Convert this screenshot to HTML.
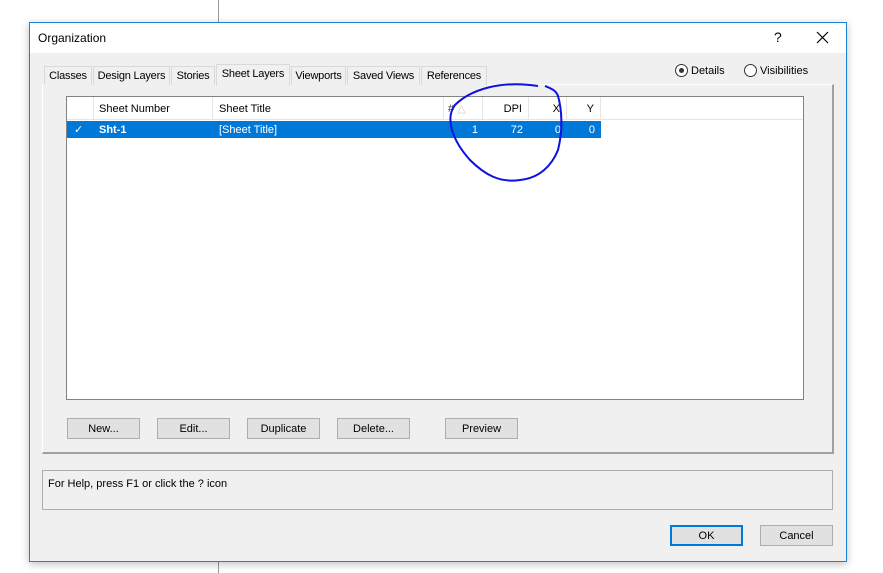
<!DOCTYPE html><html><head><style>
*{margin:0;padding:0;box-sizing:border-box}
body{width:883px;height:573px;background:#fff;position:relative;overflow:hidden;font-family:"Liberation Sans",sans-serif;font-size:11px;color:#000;white-space:nowrap}
.a{position:absolute}
.btn{position:absolute;height:21px;width:73px;background:#e1e1e1;border:1px solid #adadad;text-align:center;line-height:21px;font-size:11px}
.tab{position:absolute;top:66px;height:19px;background:#f0f0f0;border:1px solid #d9d9d9;border-bottom:none;line-height:18px;text-align:center;font-size:11px;letter-spacing:-0.2px}
.hd{position:absolute;top:0;height:23px;line-height:24px;border-right:1px solid #e5e5e5}
.c{position:absolute;top:24px;height:17px;line-height:18px;color:#fff}
</style></head><body>
<div class="a" style="left:218px;top:0;width:1px;height:22px;background:#999"></div>
<div class="a" style="left:218px;top:562px;width:1px;height:11px;background:#999"></div>
<div class="a" style="left:29px;top:22px;width:818px;height:540px;border:1px solid #1883d7;background:#f0f0f0;box-shadow:0 2px 8px rgba(0,0,0,.25)"></div>
<div class="a" style="left:30px;top:23px;width:816px;height:30px;background:#fff"></div>
<div class="a" style="left:38px;top:31px;font-size:12px">Organization</div>
<div class="a" style="left:774px;top:29px;font-size:14px">?</div>
<svg class="a" style="left:816px;top:31px" width="13" height="13"><path d="M1 1L12 12M12 1L1 12" stroke="#000" stroke-width="1.2"/></svg>
<div class="a" style="left:42px;top:84px;width:792px;height:370px;border:1px solid #fff;border-right:2px solid #a0a0a0;border-bottom:2px solid #a0a0a0;background:#f0f0f0"></div>
<div class="tab" style="left:44px;width:48px">Classes</div>
<div class="tab" style="left:93px;width:77px">Design Layers</div>
<div class="tab" style="left:171px;width:44px">Stories</div>
<div class="tab" style="left:216px;top:64px;width:74px;height:22px;line-height:19px">Sheet Layers</div>
<div class="tab" style="left:291px;width:55px">Viewports</div>
<div class="tab" style="left:347px;width:73px">Saved Views</div>
<div class="tab" style="left:421px;width:66px">References</div>
<div class="a" style="left:675px;top:64px;width:13px;height:13px;border:1px solid #333;border-radius:50%;background:#fff"></div>
<div class="a" style="left:679px;top:68px;width:5px;height:5px;border-radius:50%;background:#333"></div>
<div class="a" style="left:691px;top:65px">Details</div>
<div class="a" style="left:744px;top:64px;width:13px;height:13px;border:1px solid #333;border-radius:50%;background:#fff"></div>
<div class="a" style="left:760px;top:65px">Visibilities</div>
<div class="a" style="left:66px;top:96px;width:738px;height:304px;border:1px solid #828282;background:#fff">
<div class="a" style="left:0;top:0;width:736px;height:23px;background:#fff;border-bottom:1px solid #e5e5e5"></div>
<div class="hd" style="left:0;width:27px"></div>
<div class="hd" style="left:27px;width:119px;padding-left:5px">Sheet Number</div>
<div class="hd" style="left:146px;width:231px;padding-left:6px">Sheet Title</div>
<div class="hd" style="left:377px;width:39px;padding-left:4px;color:#333">#&nbsp;<span style="color:#ccc">△</span></div>
<div class="hd" style="left:416px;width:46px;text-align:right;padding-right:6px">DPI</div>
<div class="hd" style="left:462px;width:38px;text-align:right;padding-right:6px">X</div>
<div class="hd" style="left:500px;width:34px;text-align:right;padding-right:6px">Y</div>
<div class="a" style="left:0;top:24px;width:534px;height:17px;background:#0078d7"></div>
<div class="c" style="left:7px">✓</div>
<div class="c" style="left:32px;font-weight:bold">Sht-1</div>
<div class="c" style="left:152px">[Sheet Title]</div>
<div class="c" style="left:377px;width:34px;text-align:right">1</div>
<div class="c" style="left:416px;width:40px;text-align:right">72</div>
<div class="c" style="left:462px;width:32px;text-align:right">0</div>
<div class="c" style="left:500px;width:28px;text-align:right">0</div>
</div>
<div class="btn" style="left:67px;top:418px">New...</div>
<div class="btn" style="left:157px;top:418px">Edit...</div>
<div class="btn" style="left:247px;top:418px">Duplicate</div>
<div class="btn" style="left:337px;top:418px">Delete...</div>
<div class="btn" style="left:445px;top:418px">Preview</div>
<div class="a" style="left:42px;top:470px;width:791px;height:40px;border:1px solid #adadad"></div>
<div class="a" style="left:48px;top:478px">For Help, press F1 or click the ? icon</div>
<div class="btn" style="left:670px;top:525px;border:2px solid #0078d7;line-height:19px">OK</div>
<div class="btn" style="left:760px;top:525px">Cancel</div>
<svg class="a" style="left:0;top:0" width="883" height="573"><path d="M538 86 C500 80 470 90 455 105 C445 118 452 140 470 160 C485 175 500 183 520 180 C540 178 552 165 558 150 C563 130 562 110 558 96 C556 90 550 88 545 86" fill="none" stroke="#1010e0" stroke-width="2"/></svg>
</body></html>
